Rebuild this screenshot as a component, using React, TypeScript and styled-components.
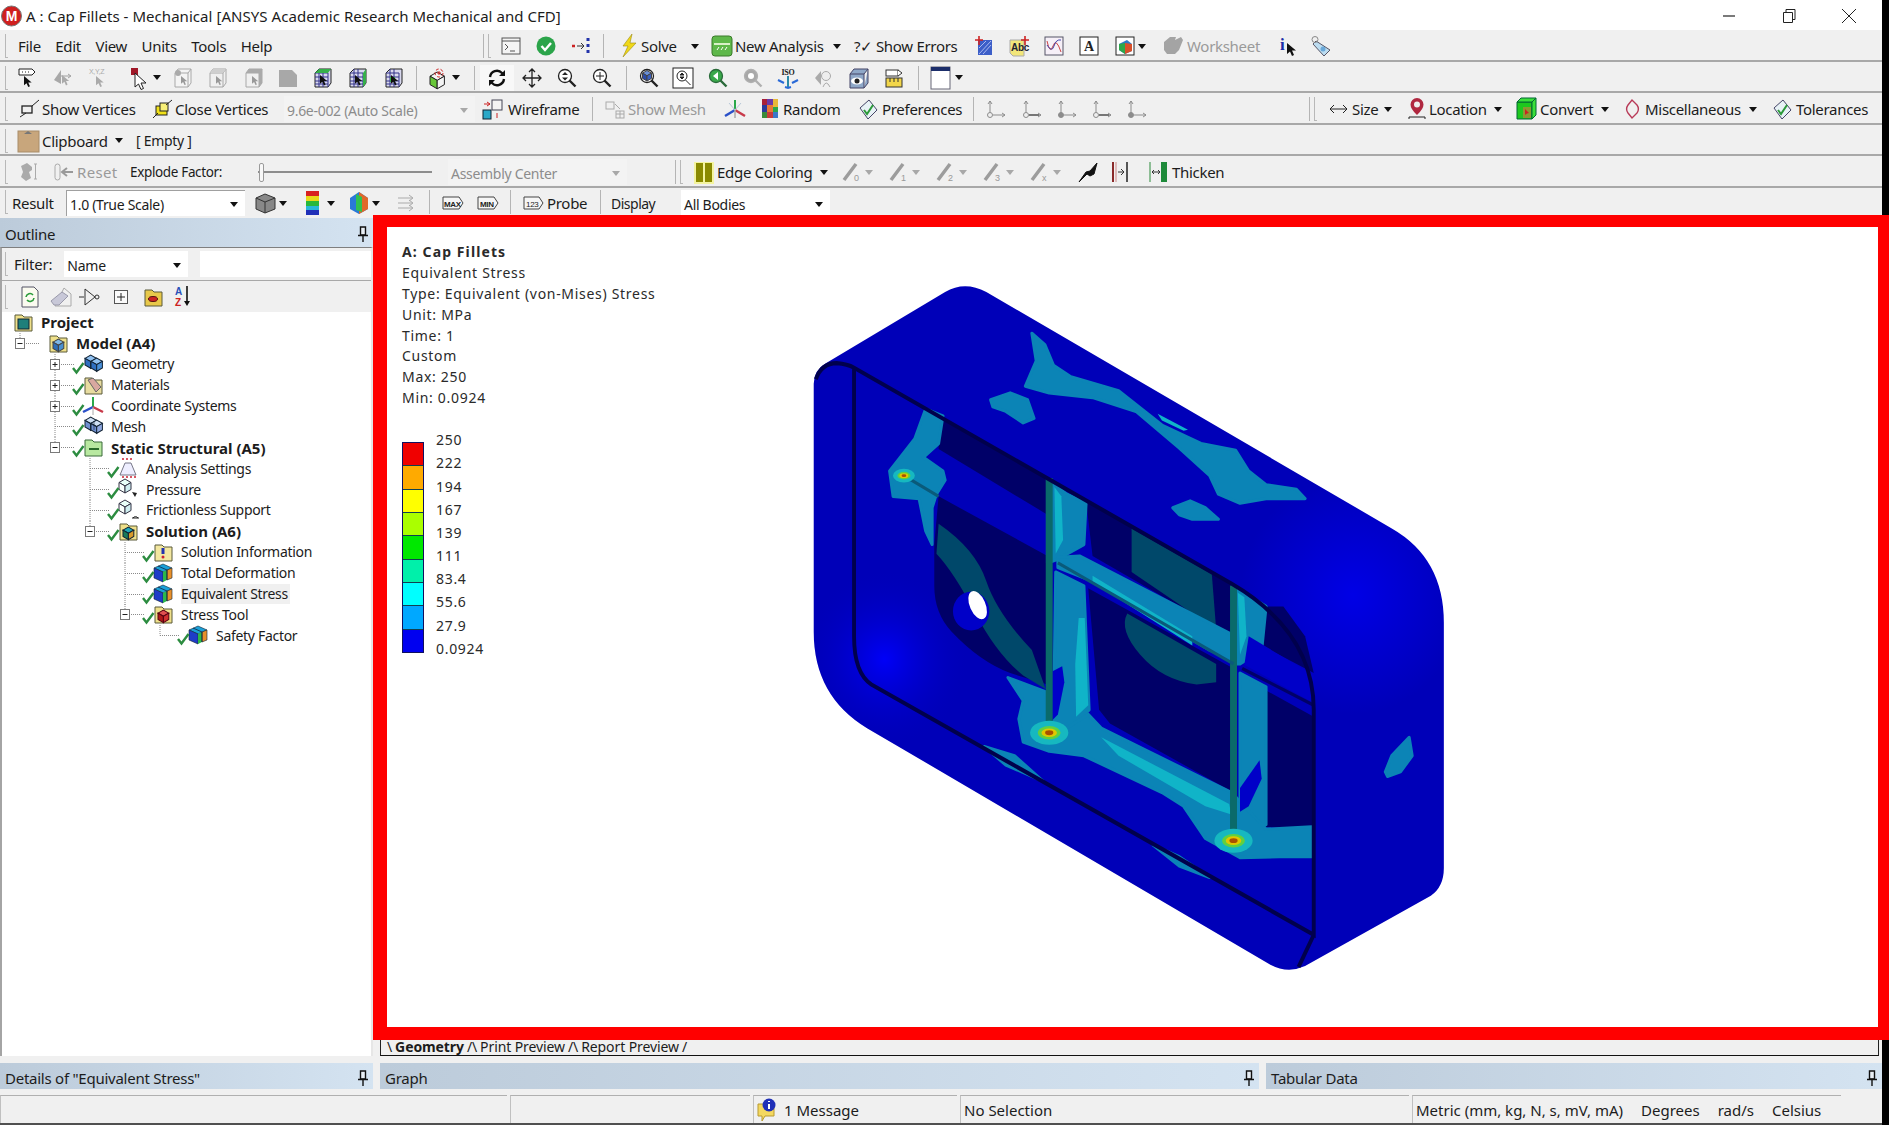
import React from "react";
import styled, { createGlobalStyle } from "styled-components";

const GlobalStyle = createGlobalStyle`
  html, body { margin: 0; padding: 0; background: #000; }
  body { font-family: "Noto Sans", "Liberation Sans", sans-serif; color: #1c1c1c; overflow: hidden; }
`;

const Page = styled.div`
  width: 1889px;
  height: 1125px;
  display: flex;
  background: #000;
  overflow: hidden;
`;

const Main = styled.div`
  width: 1882px;
  height: 1125px;
  display: flex;
  flex-direction: column;
  background: #f0f0f0;
  flex-shrink: 0;
`;

const TitleBar = styled.div`
  height: 30px;
  background: #fff;
  display: flex;
  align-items: center;
  padding: 1px 3px 0 1px;
  box-sizing: border-box;
  font-size: 15px;
  letter-spacing: 0.05px;
`;

const TitleText = styled.span`
  margin-left: 4px;
  flex: 1;
  white-space: nowrap;
`;

const WinButton = styled.div`
  width: 60px;
  display: flex;
  justify-content: center;
`;

const Row = styled.div<{ $h: number }>`
  height: ${(p) => p.$h}px;
  box-sizing: border-box;
  border-bottom: 2px solid #a8a8a8;
  display: flex;
  align-items: center;
  font-size: 15px;
  letter-spacing: -0.3px;
  white-space: nowrap;
  padding: 2px 0 0 5px;
`;

const LastRow = styled(Row)`
  border-bottom: none;
  align-items: flex-start;
  padding-top: 2px;
`;

const Grip = styled.div`
  width: 3px;
  height: 24px;
  margin-right: 2px;
  border-left: 1px solid #b8b8b8;
  border-bottom: 1px solid #b8b8b8;
  box-sizing: border-box;
  flex-shrink: 0;
`;

const Menu = styled.div`
  width: 468px;
  display: flex;
  gap: 14.5px;
  padding-left: 8px;
  box-sizing: border-box;
  flex-shrink: 0;
`;

const Tool = styled.div<{ $w?: number; $pl?: number; $c?: boolean; $off?: boolean; $hi?: boolean }>`
  ${(p) => (p.$w ? `width: ${p.$w}px;` : "")}
  padding-left: ${(p) => p.$pl ?? 0}px;
  box-sizing: border-box;
  height: 26px;
  flex-shrink: 0;
  display: flex;
  align-items: center;
  gap: 3px;
  justify-content: ${(p) => (p.$c ? "center" : "flex-start")};
  color: ${(p) => (p.$off ? "#9a9a9a" : "inherit")};
  background: ${(p) => (p.$hi ? "#f8f8f8" : "transparent")};
`;

const Sep = styled.div<{ $w: number }>`
  width: ${(p) => p.$w}px;
  flex-shrink: 0;
  display: flex;
  justify-content: center;
  &::after {
    content: "";
    width: 1px;
    height: 24px;
    background: #b4b4b4;
  }
`;

const Caret = styled.div<{ $off?: boolean }>`
  width: 0;
  height: 0;
  flex-shrink: 0;
  border-left: 4.5px solid transparent;
  border-right: 4.5px solid transparent;
  border-top: 5px solid ${(p) => (p.$off ? "#a8a8a8" : "#111")};
`;

const Combo = styled.div<{ $w: number; $white?: boolean; $sunken?: boolean; $off?: boolean }>`
  width: ${(p) => p.$w}px;
  height: 26px;
  flex-shrink: 0;
  box-sizing: border-box;
  display: flex;
  align-items: center;
  justify-content: space-between;
  padding: 2px 7px 0 3px;
  background: ${(p) => (p.$white ? "#fff" : "#f3f3f3")};
  color: ${(p) => (p.$off ? "#8c8c8c" : "inherit")};
  font-size: 14px;
  ${(p) => (p.$sunken ? "border-top: 1px solid #a0a0a0; border-left: 1px solid #a0a0a0;" : "")}
`;

const Slider = styled.div`
  width: 174px;
  margin-right: 16px;
  flex-shrink: 0;
  height: 2px;
  background: #8d8d8d;
  position: relative;
  &::before {
    content: "";
    position: absolute;
    left: 1px;
    top: -8px;
    width: 3px;
    height: 17px;
    background: #f8f8f8;
    border: 1px solid #9a9a9a;
    border-radius: 2px;
  }
`;

const Workspace = styled.div`
  height: 841px;
  display: flex;
  flex-shrink: 0;
`;

const LeftPanel = styled.div`
  width: 373px;
  flex-shrink: 0;
  padding-top: 3px;
  box-sizing: border-box;
  display: flex;
  flex-direction: column;
`;

const PaneHeader = styled.div<{ $w?: number }>`
  ${(p) => (p.$w ? `width: ${p.$w}px; flex-shrink: 0;` : "flex: 1;")}
  height: 26px;
  background: linear-gradient(90deg, #bccbda, #d4e3f1);
  display: flex;
  align-items: center;
  justify-content: space-between;
  padding: 3px 5px 0;
  box-sizing: border-box;
  font-size: 15px;
  letter-spacing: -0.25px;
`;

const OutlineHeader = styled(PaneHeader)`
  height: 29px;
  flex: none;
`;

const OutlineBody = styled.div`
  flex: 1;
  display: flex;
  flex-direction: column;
  border-top: 1px solid #7f7f7f;
  border-left: 2px solid #a4a4a4;
  border-right: 2px solid #e6e6e6;
`;

const FilterRow = styled.div`
  height: 33px;
  flex-shrink: 0;
  box-sizing: border-box;
  border-bottom: 1px solid #a8a8a8;
  display: flex;
  align-items: center;
  padding-left: 3px;
  font-size: 15px;
  letter-spacing: -0.2px;
`;

const FilterLabel = styled.span`
  margin-left: 4px;
`;

const FilterSelect = styled(Combo)`
  margin: 0 12px 0 12px;
`;

const FilterInput = styled.div`
  flex: 1;
  height: 26px;
  background: #fff;
`;

const OutlineTools = styled.div`
  height: 31px;
  flex-shrink: 0;
  display: flex;
  align-items: center;
  padding-left: 3px;
`;

const Tree = styled.div`
  flex: 1;
  background: #fff;
  font-size: 14px;
  letter-spacing: -0.3px;
`;

const TreeRow = styled.div<{ $depth: number }>`
  height: 20.9px;
  display: flex;
  align-items: center;
  padding-left: ${(p) => 3 + Math.max(p.$depth - 1, 0) * 35}px;
  white-space: nowrap;
`;

const TreeLabel = styled.span<{ $bold?: boolean; $sel?: boolean }>`
  font-weight: ${(p) => (p.$bold ? 700 : 400)};
  font-size: ${(p) => (p.$bold ? 15 : 14)}px;
  letter-spacing: ${(p) => (p.$bold ? "0" : "inherit")};
  background: ${(p) => (p.$sel ? "#f0f0f0" : "transparent")};
  padding: 0 2px 0 0;
  line-height: 20px;
`;

const ViewColumn = styled.div`
  flex: 1;
  min-width: 0;
  display: flex;
  flex-direction: column;
`;

const Frame = styled.div`
  height: 825px;
  box-sizing: border-box;
  margin-right: -7px;
  border-style: solid;
  border-color: #ff0000;
  border-width: 12px 11px 13px 14px;
  background: #fff;
  display: flex;
  flex-shrink: 0;
`;

const Legend = styled.div`
  width: 402px;
  flex-shrink: 0;
  padding: 15px 0 0 15px;
  box-sizing: border-box;
  font-size: 14px;
  letter-spacing: 0.7px;
  color: #2a2a2a;
`;

const LegendLine = styled.div<{ $bold?: boolean }>`
  height: 20.9px;
  line-height: 20.9px;
  font-weight: ${(p) => (p.$bold ? 700 : 400)};
  letter-spacing: ${(p) => (p.$bold ? "1.1px" : "inherit")};
  white-space: nowrap;
`;

const Scale = styled.div`
  display: flex;
  margin-top: 19px;
`;

const ScaleBars = styled.div`
  width: 22px;
  border: 1px solid #101060;
  box-sizing: border-box;
  margin: 14px 12px 0 0;
  height: 211px;
  display: flex;
  flex-direction: column;
`;

const ScaleBand = styled.div<{ $c: string }>`
  flex: 1;
  background: ${(p) => p.$c};
  & + & {
    border-top: 1px solid #104050;
  }
`;

const ScaleValue = styled.div`
  height: 23.2px;
  line-height: 23.2px;
`;

const ModelSvg = styled.svg`
  margin-top: 42px;
  flex-shrink: 0;
`;

const TabStrip = styled.div`
  height: 16px;
  margin-left: 7px;
  margin-right: 3px;
  box-sizing: border-box;
  border-left: 1px solid #222;
  border-right: 1px solid #222;
  border-bottom: 1px solid #111;
  font-size: 14px;
  letter-spacing: -0.1px;
  line-height: 14px;
  padding-left: 6px;
  display: flex;
  white-space: nowrap;
`;

const TabName = styled.span<{ $on?: boolean }>`
  font-weight: ${(p) => (p.$on ? 700 : 400)};
  margin: 0 3px;
`;

const HeaderRow = styled.div`
  height: 26px;
  margin-top: 7px;
  display: flex;
  gap: 7px;
  flex-shrink: 0;
`;

const StatusBar = styled.div`
  height: 28px;
  margin-top: 6px;
  display: flex;
  flex-shrink: 0;
  font-size: 15px;
  white-space: nowrap;
`;

const StatusCell = styled.div<{ $w: number }>`
  width: ${(p) => p.$w}px;
  flex-shrink: 0;
  box-sizing: border-box;
  border-top: 1px solid #b0b0b0;
  border-left: 1px solid #c0c0c0;
  margin-right: 3px;
  display: flex;
  align-items: center;
  padding-left: 3px;
  padding-top: 1px;
`;

const UnitText = styled.span<{ $ml: number }>`
  margin-left: ${(p) => p.$ml}px;
`;

const BottomLine = styled.div`
  height: 2px;
  background: #505050;
`;

const Ico = styled.svg`
  flex-shrink: 0;
  overflow: visible;
`;

/* ---------- small drawings ---------- */

const I: React.FC<{ w?: number; h?: number; children: React.ReactNode }> = ({ w = 20, h = 20, children }) => (
  <Ico width={w} height={h} viewBox={`0 0 ${w} ${h}`}>
    {children}
  </Ico>
);

const Pointer = ({ x = 0, y = 0, c = "#111", s = 1 }: { x?: number; y?: number; c?: string; s?: number }) => (
  <path transform={`translate(${x} ${y}) scale(${s})`} d="M0 0v11l3-2.5 2 4.5 2-1-2-4.5h4z" fill={c} />
);

const Cube = ({ x = 0, y = 0, s = 1, t = "#fff", l = "#ddd", r = "#bbb", b = "#444" }: { x?: number; y?: number; s?: number; t?: string; l?: string; r?: string; b?: string }) => (
  <g transform={`translate(${x} ${y}) scale(${s})`} stroke={b} strokeWidth={1 / s}>
    <path d="M0 3.5 6 0l6 3.5L6 7z" fill={t} />
    <path d="M0 3.5 6 7v7L0 10.500z" fill={l} />
    <path d="M12 3.500 6 7v7l6-3.500z" fill={r} />
  </g>
);

const Folder = ({ c = "#efe08a" }: { c?: string }) => (
  <path d="M1 3h7l2 2h8v14H1z" fill={c} stroke="#5a5a3a" />
);

const GridBox = ({ c }: { c: string }) => (
  <I>
    <path d="M2 5 6 1h12v14l-3 4H2z" fill="#d8d8ee" stroke="#222" />
    <path d="M2 5h13v14M6 1v4M10 1v18M6 5v14M2 9h13M2 13h13M2 16h13" stroke="#33338a" fill="none" />
    <path d={c === "t" ? "M6 1h12l-3 4H2z" : c === "r" ? "M15 5l3-4v14l-3 4z" : "M6 9h5v5H6z"} fill="#35b04a" />
    <Pointer x={7} y={7} s={0.8} />
  </I>
);

const GrayBox = ({ i }: { i: number }) => (
  <I>
    <path d="M3 5h13v14H3zM3 5l3-4h13l-3 4M16 19l3-4V1" fill={i === 1 ? "#f4f4f4" : "#f0f0f0"} stroke="#a8a8a8" />
    {i === 1 && <circle cx="6" cy="5" r="3" fill="#aaa" />}
    {i === 2 && <path d="M3 5l3-4h13l-3 4z" fill="#cfcfcf" />}
    {i === 3 && <path d="M3 5l3-4h13l-3 4zM16 5l3-4v14l-3 4z" fill="#aaa" />}
    <Pointer x={9} y={8} c="#999" s={0.7} />
  </I>
);

const Magnifier = ({ f = "#fff", c = "#222", children }: { f?: string; c?: string; children?: React.ReactNode }) => (
  <I>
    <circle cx="8" cy="8" r="6.5" fill={f} stroke={c} strokeWidth="1.3" />
    <path d="M12.500 12.500 18.500 18.500" stroke={c} strokeWidth="2.4" />
    {children}
  </I>
);

const Axis = ({ solid, box }: { solid?: boolean; box?: boolean }) => (
  <I w={22}>
    <path d="M5 16V2M3 5l2-3 2 3M8 16h12M17 14l3 2-3 2" stroke="#8c8c8c" fill="none" />
    <circle cx="5" cy="16" r="2.5" fill={solid ? "#8c8c8c" : "#f0f0f0"} stroke="#8c8c8c" />
    {box && <path d="M8 16h10" stroke="#777" strokeWidth="2" />}
  </I>
);

const Edge = ({ n }: { n: string }) => (
  <I w={19}>
    <path d="M1 18 13 2" stroke="#9c9c9c" strokeWidth="3.500" />
    <text x="11" y="19" fontSize="9" fill="#999" fontFamily="Liberation Sans, sans-serif">{n}</text>
  </I>
);

const Triad = () => (
  <I w={22}>
    <path d="M11 11V1" stroke="#2aa84a" strokeWidth="2" />
    <path d="M11 11 1 17" stroke="#2a50c8" strokeWidth="2.500" />
    <path d="M11 11l10 6" stroke="#c83a4a" strokeWidth="2.500" />
    <path d="M11 11v8" stroke="#aaa" strokeWidth="1.500" />
    <path d="M11 11 5 4M11 11l6-7" stroke="#b8c8d8" />
  </I>
);

const Pin = () => (
  <I w={10} h={16}>
    <path d="M2.500 1h5v8h-5z" fill="#e8eef4" stroke="#111" strokeWidth="1.400" />
    <path d="M0 9.500h10M5 10v6" stroke="#111" strokeWidth="1.400" />
  </I>
);

const DocCheck = () => (
  <I w={22}>
    <path d="M3 9 12 1l8 10-9 9z" fill="#e8f2f6" stroke="#446" />
    <path d="M7 11l3 4 6-9" stroke="#2c9a3a" strokeWidth="2" fill="none" />
  </I>
);

const RainbowCube = ({ x = 8 }: { x?: number }) => (
  <g transform={`translate(${x} 1)`}>
    <path d="M0 4 9 0l9 4-9 4z" fill="#1aa0d8" stroke="#123" strokeWidth=".6" />
    <path d="M0 4l9 4v10l-9-4z" fill="#1e3cc8" stroke="#123" strokeWidth=".6" />
    <path d="M9 8v10l4-2V6z" fill="#2cb84a" />
    <path d="M13 6v10l5-2V4z" fill="#e8902a" stroke="#123" strokeWidth=".6" />
    <path d="M4 2l9 4v10" fill="none" stroke="#124" strokeWidth=".8" />
  </g>
);

const Check = () => <path d="M-2 14 1.500 18.500 8.500 9" stroke="#2c8c40" strokeWidth="2.400" fill="none" />;

type TreeKind = "project" | "model" | "geometry" | "materials" | "coords" | "mesh" | "analysis" | "settings" | "pressure" | "support" | "solution" | "info" | "result" | "tool";

const TreeIcon = ({ kind, check }: { kind: TreeKind; check?: boolean }) => (
  <Ico width={36} height={21} viewBox="0 0 36 21">
    {kind === "project" && (
      <g transform="translate(9 0)">
        <Folder />
        <rect x="4" y="7" width="11" height="10" fill="#1f7f7a" stroke="#123" />
      </g>
    )}
    {kind === "model" && (
      <g transform="translate(9 0)">
        <Folder />
        <Cube x={4} y={6} s={0.9} t="#7fb8e8" l="#2f6fb8" r="#4a8fd0" />
      </g>
    )}
    {kind === "geometry" && (
      <>
        <Cube x={10} y={1} s={0.95} t="#8fc0f0" l="#2f6fc0" r="#4a90d8" b="#123" />
        <Cube x={16} y={4} s={0.95} t="#8fc0f0" l="#2f6fc0" r="#4a90d8" b="#123" />
      </>
    )}
    {kind === "materials" && (
      <g transform="translate(9 0)">
        <Folder c="#e8dca0" />
        <path d="M4 5 9 3l8 9-5 5z" fill="#d8a8a0" stroke="#666" />
      </g>
    )}
    {kind === "coords" && (
      <g transform="translate(8 0)">
        <path d="M10 11V1" stroke="#2aa84a" strokeWidth="2" />
        <path d="M10 11 0 16" stroke="#2a50c8" strokeWidth="2.500" />
        <path d="M10 11l10 5" stroke="#c83a4a" strokeWidth="2.500" />
        <path d="M10 11v8" stroke="#aaa" />
      </g>
    )}
    {kind === "mesh" && (
      <>
        <Cube x={10} y={1} s={0.95} t="#cfe0f4" l="#6f8fd0" r="#8fa8e0" b="#123" />
        <Cube x={16} y={4} s={0.95} t="#cfe0f4" l="#6f8fd0" r="#8fa8e0" b="#123" />
        <path d="M16 8l6 3M19 5v9M11 5l5 3" stroke="#123" strokeWidth=".6" />
      </>
    )}
    {kind === "analysis" && (
      <g transform="translate(9 0)">
        <path d="M1 3h7l2 2h8v14H1z" fill="#b8e8a0" stroke="#3a6a3a" />
        <path d="M5 12h10" stroke="#2a6a2a" strokeWidth="2" />
      </g>
    )}
    {kind === "settings" && (
      <g transform="translate(9 0)">
        <path d="M3 1h12M3 19h14" stroke="#c23" strokeWidth="1.500" strokeDasharray="2 2" />
        <path d="M1 17 6 5h6l5 12z" fill="#eef" stroke="#778" />
      </g>
    )}
    {(kind === "pressure" || kind === "support") && (
      <g transform="translate(8 0)">
        <Cube x={1} y={0} s={1} t="#e8fff8" l="#f8fffc" r="#cfeef0" b="#334" />
        {kind === "pressure" ? (
          <path d="M14 13l5 1-2 4z" fill="#222" />
        ) : (
          <path d="M14 18h7M15 18a3 3 0 0 1 5 0" stroke="#222" fill="none" />
        )}
      </g>
    )}
    {kind === "solution" && (
      <g transform="translate(9 0)">
        <Folder />
        <Cube x={4} y={6} s={0.9} t="#20a8b8" l="#1a7a5a" r="#d89a2a" b="#123" />
      </g>
    )}
    {kind === "info" && (
      <g transform="translate(9 0)">
        <Folder c="#f3e7a0" />
        <path d="M9 6v6" stroke="#2333b0" strokeWidth="3" />
        <circle cx="9" cy="15" r="1.500" fill="#c23" />
      </g>
    )}
    {kind === "result" && <RainbowCube x={9} />}
    {kind === "tool" && (
      <g transform="translate(9 0)">
        <Folder />
        <Cube x={4} y={6} s={0.9} t="#e05050" l="#b01818" r="#d03030" b="#501" />
      </g>
    )}
    {check && <Check />}
  </Ico>
);

const Connector = ({ mode, last, stub }: { mode: "plus" | "minus" | "line"; last?: boolean; stub?: boolean }) => (
  <Ico width={35} height={21} viewBox="0 0 35 21">
    <g stroke="#8a8a8a" strokeDasharray="1 1">
      <path d={`M15 0V${last ? (stub ? 6 : 10.5) : 21}`} />
      <path d="M15 10.500H35" />
    </g>
    {mode !== "line" && (
      <>
        <rect x="10.500" y="5.500" width="9" height="10" fill="#fff" stroke="#7a7a7a" />
        <path d={mode === "plus" ? "M12.500 10.500h5M15 8v5" : "M12.500 10.500h5"} stroke="#222" />
      </>
    )}
  </Ico>
);

/* ---------- data ---------- */

type TreeItem = {
  label: string;
  depth: number;
  icon: TreeKind;
  conn?: "plus" | "minus" | "line";
  last?: boolean;
  bold?: boolean;
  check?: boolean;
  sel?: boolean;
};

const treeItems: TreeItem[] = [
  { label: "Project", depth: 0, icon: "project", bold: true },
  { label: "Model (A4)", depth: 1, icon: "model", conn: "minus", last: true, bold: true },
  { label: "Geometry", depth: 2, icon: "geometry", conn: "plus", check: true },
  { label: "Materials", depth: 2, icon: "materials", conn: "plus", check: true },
  { label: "Coordinate Systems", depth: 2, icon: "coords", conn: "plus", check: true },
  { label: "Mesh", depth: 2, icon: "mesh", conn: "line", check: true },
  { label: "Static Structural (A5)", depth: 2, icon: "analysis", conn: "minus", last: true, bold: true, check: true },
  { label: "Analysis Settings", depth: 3, icon: "settings", conn: "line", check: true },
  { label: "Pressure", depth: 3, icon: "pressure", conn: "line", check: true },
  { label: "Frictionless Support", depth: 3, icon: "support", conn: "line", check: true },
  { label: "Solution (A6)", depth: 3, icon: "solution", conn: "minus", last: true, bold: true, check: true },
  { label: "Solution Information", depth: 4, icon: "info", conn: "line", check: true },
  { label: "Total Deformation", depth: 4, icon: "result", conn: "line", check: true },
  { label: "Equivalent Stress", depth: 4, icon: "result", conn: "line", check: true, sel: true },
  { label: "Stress Tool", depth: 4, icon: "tool", conn: "minus", last: true, check: true },
  { label: "Safety Factor", depth: 5, icon: "result", conn: "line", last: true, check: true },
];

const legendInfo = ["Equivalent Stress", "Type: Equivalent (von-Mises) Stress", "Unit: MPa", "Time: 1", "Custom", "Max: 250", "Min: 0.0924"];
const scaleValues = ["250", "222", "194", "167", "139", "111", "83.4", "55.6", "27.9", "0.0924"];
const scaleColors = ["#f00000", "#ffaa00", "#ffff00", "#aaff00", "#00e800", "#00f0aa", "#00ffff", "#00a8ff", "#0000f0"];

/* ---------- the stress plot, traced in the crop's own units ---------- */

const navy = "#000068";
const teal = "#00486a";
const band = "#0b84b6";
const aqua = "#10b4c8";
const shell =
  "M360 50Q405 25 455 50L1390 565Q1510 630 1510 770V1305Q1510 1345 1480 1365L1190 1518Q1150 1535 1110 1515L180 1000Q57 930 57 790V250Q57 220 85 205Z";

const HotSpot = ({ x, y, k = 1 }: { x: number; y: number; k?: number }) => (
  <g transform={`translate(${x} ${y}) scale(${k})`}>
    <ellipse rx="42" ry="25" fill="#16b8c0" />
    <ellipse rx="25" ry="14" fill="#60d040" />
    <ellipse rx="17" ry="9" fill="#e0c800" />
    <ellipse rx="9" ry="5" fill="#a85000" />
  </g>
);

const StressModel = () => (
  <ModelSvg width={680} height={720} viewBox="0 0 1568 1568" preserveAspectRatio="none">
    <defs>
      <radialGradient id="glowR" cx="1300" cy="710" r="260" gradientUnits="userSpaceOnUse">
        <stop offset="0" stopColor="#0000e6" />
        <stop offset="1" stopColor="#0000b8" />
      </radialGradient>
      <radialGradient id="glowL" cx="220" cy="850" r="190" gradientUnits="userSpaceOnUse">
        <stop offset="0" stopColor="#0000f8" />
        <stop offset="1" stopColor="#0000c0" stopOpacity="0" />
      </radialGradient>
      <clipPath id="shellClip">
        <path d={shell} />
      </clipPath>
    </defs>
    <path d={shell} fill="url(#glowR)" />
    <path d="M57 600H450V1100H57Z" fill="url(#glowL)" clipPath="url(#shellClip)" />
    <path d="M345 322 596 455V535L345 392Z" fill={navy} />
    <path d="M345 495 596 625V905L510 880Q440 855 375 790Q335 750 335 690V600Z" fill={navy} />
    <path d="M345 555Q430 610 455 680T560 830L592 915 540 885Q480 840 430 750T340 620Z" fill={teal} />
    <ellipse cx="420" cy="745" rx="42" ry="42" fill="#0000c8" />
    <ellipse cx="435" cy="732" rx="18" ry="33" transform="rotate(-25 435 732)" fill="#fff" />
    <path d="M685 505 1030 690V805L700 625Z" fill={navy} />
    <path d="M790 565 975 665 985 785 790 660Z" fill={teal} />
    <path d="M690 695 1025 870V1140L740 990 715 960Z" fill={navy} />
    <path d="M780 750 985 860V900L940 905Q860 895 810 840T780 750Z" fill={teal} />
    <path d="M1100 735H1140L1190 800 1210 880 1070 810Z" fill={navy} />
    <path d="M1095 915 1210 975V1220L1100 1215Z" fill={navy} />

    <g fill={band} stroke={band} strokeWidth="7" strokeLinejoin="round">
      <path d="M560 140 590 165 610 210 650 235 760 265 860 340 950 380 1030 395 1060 440 1100 470 1170 480 1190 500 1100 500 1040 510 990 490 970 450 900 390 800 310 700 280 600 270 545 255 570 200Z" />
      <path d="M465 285 510 270 550 285 565 325 540 335 500 310 470 300Z" />
      <path d="M885 520 925 505 960 520 990 545 930 545 900 535Z" />
      <path d="M1375 1095 1390 1060 1430 1020 1437 1060 1410 1095 1380 1105Z" />
      <path d="M450 1040 520 1060 585 1115 500 1080Z" />
      <path d="M840 1255 900 1280 970 1325 900 1300Z" />
      <path d="M315 305 355 320 345 380 310 410 355 440 360 460 340 490 330 520 330 600 315 570 300 500 240 495 232 440 290 370Z" />
      <path d="M596 458 640 490 685 510 680 600 620 632 596 640Z" />
      <path d="M615 660 680 690 692 960 640 1010 610 990Z" />
      <path d="M1022 690 1100 735 1090 830 1040 860 1022 860Z" />
      <path d="M1040 880 1100 910 1100 1210 1050 1232 1040 1180Z" />
      <path d="M620 628 670 625 1030 800V855L970 830 700 680 620 650Z" />
      <path d="M505 890 590 920 600 990 640 1000 690 970 720 1000 1020 1140 1100 1220 1205 1215V1280H1130L1040 1282 960 1240 910 1170 860 1140 680 1060 600 1050 540 1030 530 980 540 940Z" />
    </g>
    <path d="M850 315 920 350 910 352 860 330Z" fill={aqua} />
    <path d="M612 475 628 495 632 590 615 620Z" fill={aqua} />
    <path d="M668 760 682 760 690 950 662 975 660 860Z" fill={aqua} />
    <path d="M600 880 630 865 635 900 620 970 605 985Z" fill="#0000c8" />
    <path d="M1035 705 1050 715 1055 800 1040 840Z" fill={aqua} />
    <path d="M1040 1130 1085 1070 1090 1110 1060 1170 1040 1182Z" fill="#0000c8" />
    <path d="M700 668 930 800 930 820 700 682Z" fill={aqua} />
    <path d="M1050 862 1210 945V885L1060 800Z" fill="#0000c8" />
    <path d="M720 1020 1015 1165 1020 1188 960 1170 760 1060Z" fill={aqua} />

    <path d="M600 455V1000M1025 690V1235" stroke="#0a6a6a" strokeWidth="16" fill="none" />
    <path d="M265 450 345 495M620 640 1025 860" stroke="#0a5a7a" strokeWidth="7" fill="none" />
    <path d="M1045 870 1210 950" stroke={navy} strokeWidth="7" fill="none" />
    <HotSpot x={600} y={1010} k={1.05} />
    <HotSpot x={1025} y={1245} k={1.05} />
    <HotSpot x={265} y={450} k={0.6} />

    <path
      d="M62 240Q75 205 110 205Q135 207 150 215L1020 685Q1210 790 1210 960V1450L190 905Q150 880 150 800V215M1210 1450 1175 1520"
      fill="none"
      stroke="#00004c"
      strokeWidth="9"
    />
  </ModelSvg>
);

/* ---------- app ---------- */

export default function App() {
  return (
    <Page>
      <GlobalStyle />
      <Main>
        <TitleBar>
          <I w={21} h={22}>
            <circle cx="10.500" cy="11" r="10" fill="#cf1f1f" stroke="#777" />
            <text x="10.500" y="16" fontSize="14" fontWeight="700" fill="#fff" textAnchor="middle" fontFamily="Liberation Sans, sans-serif">M</text>
          </I>
          <TitleText>A : Cap Fillets - Mechanical [ANSYS Academic Research Mechanical and CFD]</TitleText>
          <WinButton><I w={14} h={14}><path d="M1 7h12" stroke="#222" strokeWidth="1.200" /></I></WinButton>
          <WinButton><I w={14} h={14}><path d="M1.500 3.500h9v10h-9zM4 3.500V.5h9v10h-2" fill="none" stroke="#222" /></I></WinButton>
          <WinButton><I w={14} h={14}><path d="M0 0l14 14M14 0 0 14" stroke="#222" /></I></WinButton>
        </TitleBar>

        <Row $h={32}>
          <Grip />
          <Menu>
            <span>File</span><span>Edit</span><span>View</span><span>Units</span><span>Tools</span><span>Help</span>
          </Menu>
          <Sep $w={10} />
          <Grip />
          <Tool $w={42} $pl={8}>
            <I><rect x="1" y="2" width="18" height="16" fill="#f4f4f4" stroke="#555" /><path d="M1 5h18M4 8l3 3-3 3M9 15h5" stroke="#555" fill="none" /></I>
          </Tool>
          <Tool $w={36}>
            <I w={22}><circle cx="11" cy="10" r="9.500" fill="#2ba44a" /><path d="M6.500 10l3.500 4 6-7" stroke="#fff" strokeWidth="2.400" fill="none" /></I>
          </Tool>
          <Tool $w={26}>
            <I w={20}><path d="M1 10h3" stroke="#c22" strokeWidth="2.500" /><path d="M6 10h6M10 7l3 3-3 3" stroke="#333" fill="none" /><path d="M17 2v3M17 8v3M17 14v3" stroke="#23a" strokeWidth="3" /></I>
          </Tool>
          <Sep $w={12} />
          <Tool $w={81} $pl={9}>
            <I w={20} h={24}><path d="M14 0 5 12h5L5 23l13-14h-6z" fill="#f0d818" stroke="#9a8a10" strokeWidth=".6" /></I>
            <span>Solve</span>
          </Tool>
          <Tool $w={22} $pl={1}><Caret /></Tool>
          <Tool $w={120}>
            <I><rect x="0" y="0" width="20" height="20" rx="3" fill="#5eb84a" stroke="#3a7a2a" /><path d="M2 8h16" stroke="#d8f0c8" strokeWidth="2" /><path d="M5 14l2-3M9 14l2-3M13 14l2-3" stroke="#fff" /></I>
            <span>New Analysis</span>
          </Tool>
          <Tool $w={22} $pl={1}><Caret /></Tool>
          <Tool $w={120}>
            <span>?✓</span>
            <span>Show Errors</span>
          </Tool>
          <Tool $w={35}>
            <I><rect x="4" y="4" width="14" height="15" fill="#3c5ec8" /><path d="M5 18 17 5M9 18l8-9M5 12l7-7" stroke="#a8b8f0" /><path d="M5 0v9M1 4h8" stroke="#c22" strokeWidth="1.600" /></I>
          </Tool>
          <Tool $w={35}>
            <I><path d="M1 4h14v16H4l-3-3z" fill="#f2e67a" stroke="#aaa" /><text x="2" y="15" fontSize="10" fontWeight="700" fill="#223" fontFamily="Liberation Sans, sans-serif">Abc</text><path d="M16 0v9M12 4h8" stroke="#c22" strokeWidth="1.600" /></I>
          </Tool>
          <Tool $w={35}>
            <I><rect x="1" y="1" width="18" height="18" fill="#f6f0f8" stroke="#556" /><path d="M3 5q3 14 6 5t8 6" stroke="#c44" fill="none" /><path d="M3 9q5 8 7 1t7-6" stroke="#44a" fill="none" /></I>
          </Tool>
          <Tool $w={36}>
            <I><rect x="1" y="1" width="18" height="18" fill="#fff" stroke="#222" /><text x="10" y="15" fontSize="14" fontWeight="700" fill="#222" textAnchor="middle" fontFamily="Liberation Serif, serif">A</text></I>
          </Tool>
          <Tool $w={47}>
            <I><rect x="1" y="1" width="18" height="18" fill="#fff" stroke="#222" /><path d="M4 8l8-4 5 4v7l-7 3-6-4z" fill="#2c7ac8" /><path d="M10 7l7 1v7l-7 3z" fill="#d8502a" /><path d="M4 8l6-1v11l-6-4z" fill="#2ca84a" /></I>
            <Caret />
          </Tool>
          <Tool $w={118} $off>
            <I w={22}><path d="M2 6 8 1h6l-1 3 6-3 2 3-4 10-4 4H5L2 14z" fill="#a4a4a4" /></I>
            <span>Worksheet</span>
          </Tool>
          <Tool $w={30}>
            <I><text x="0" y="14" fontSize="17" fontWeight="700" fill="#1a2ea8" fontFamily="Liberation Serif, serif">i</text><Pointer x={7} y={7} /></I>
          </Tool>
          <Tool>
            <I w={22}><path d="M6 5 20 14l-6 6L3 8z" fill="#bcdcf0" stroke="#556" /><circle cx="5" cy="3.500" r="3" fill="none" stroke="#888" /><circle cx="13" cy="13" r="2.500" fill="#6aa8d8" /></I>
          </Tool>
        </Row>

        <Row $h={31}>
          <Grip />
          <Tool $w={35} $c>
            <I><path d="M1 1h13l3 3-3 3H1z" fill="#fff" stroke="#222" /><path d="M4 4h1M7 4h1M10 4h1" stroke="#222" /><Pointer x={6} y={8} s={0.85} /></I>
          </Tool>
          <Tool $w={36} $c>
            <I><path d="M1 12 8 2v14z" fill="#a8a8a8" /><path d="M8 8h9M15 6l3 2-3 2" stroke="#a0a0a0" fill="none" /><Pointer x={9} y={7} c="#aaa" s={0.8} /></I>
          </Tool>
          <Tool $w={36} $c>
            <I><text x="0" y="6" fontSize="7" fill="#aaa" fontFamily="Liberation Sans, sans-serif">X,Y,Z</text><Pointer x={7} y={8} c="#aaa" s={0.85} /></I>
          </Tool>
          <Tool $w={47} $pl={14} style={{ gap: 2 }}>
            <I w={20}><rect x="0" y="0" width="7" height="7" fill="#a01828" /><path transform="translate(4 5)" d="M0 0v14l3.500-3 2.500 5.500 2.500-1-2.500-5.500h5z" fill="#fff" stroke="#222" /></I>
            <Caret />
          </Tool>
          <Tool $w={35} $c><GrayBox i={1} /></Tool>
          <Tool $w={36} $c><GrayBox i={2} /></Tool>
          <Tool $w={35} $c><GrayBox i={3} /></Tool>
          <Tool $w={35} $c>
            <I><path d="M1 2h13l5 5v12H1z" fill="#a8a8a8" /></I>
          </Tool>
          <Tool $w={35} $c><GridBox c="t" /></Tool>
          <Tool $w={36} $c><GridBox c="r" /></Tool>
          <Tool $w={35} $c><GridBox c="f" /></Tool>
          <Sep $w={10} />
          <Tool $w={47} $pl={7} style={{ gap: 2 }}>
            <I w={22}><Cube x={2} y={4} s={1.2} t="#f4f4f4" l="#68c838" r="#f4f4f4" b="#222" /><circle cx="11" cy="5" r="4" fill="none" stroke="#c22" strokeDasharray="3 2" /><path d="M9 5h4M11 3v4" stroke="#c22" /></I>
            <Caret />
          </Tool>
          <Sep $w={12} />
          <Tool $w={34} $c $hi>
            <I><path d="M3 9a7 7 0 0 1 12-4l2 2M17 11a7 7 0 0 1-12 4l-2-2" fill="none" stroke="#111" strokeWidth="2.400" /><path d="M18 2v6h-6zM2 18v-6h6z" fill="#111" /></I>
          </Tool>
          <Tool $w={35} $c>
            <I><path d="M10 1v18M1 10h18M7 4l3-3 3 3M7 16l3 3 3-3M4 7l-3 3 3 3M16 7l3 3-3 3" fill="none" stroke="#222" strokeWidth="1.300" /></I>
          </Tool>
          <Tool $w={35} $c>
            <Magnifier><path d="M5 7l3-3 3 3zM5 9.500l3 3 3-3z" fill="#222" /></Magnifier>
          </Tool>
          <Tool $w={36} $c>
            <Magnifier><path d="M4 8h8M8 4v8" stroke="#222" /></Magnifier>
          </Tool>
          <Sep $w={12} />
          <Tool $w={33} $c>
            <Magnifier><Cube x={3.500} y={2.500} s={0.75} t="#6a90d8" l="#2a4aa8" r="#3a60c0" /></Magnifier>
          </Tool>
          <Tool $w={35} $c>
            <I>
              <rect x="0" y="0" width="20" height="20" fill="#fff" stroke="#222" />
              <circle cx="9" cy="8" r="5" fill="#fff" stroke="#222" />
              <path d="M7 7l2-2 2 2zM7 9l2 2 2-2zM12.500 12l5 5" fill="#222" stroke="#222" />
            </I>
          </Tool>
          <Tool $w={35} $c>
            <Magnifier f="#3aa84a" c="#2a6a3a"><path d="M10 4 5 8l5 4z" fill="#fff" /></Magnifier>
          </Tool>
          <Tool $w={35} $c>
            <Magnifier f="#a8a8a8" c="#b0b0b0"><circle cx="8" cy="8" r="3" fill="#fff" /></Magnifier>
          </Tool>
          <Tool $w={36} $c>
            <I w={22}><text x="11" y="7" fontSize="8" fontWeight="700" fill="#222" textAnchor="middle" fontFamily="Liberation Serif, serif">ISO</text><path d="M11 8v12" stroke="#2a8aa8" strokeWidth="2" /><path d="M1 12l6 3M21 12l-6 3M8 19l3 1 3-1" stroke="#2a6ad8" strokeWidth="2" fill="none" /></I>
          </Tool>
          <Tool $w={35} $c>
            <I><path d="M1 10 7 3v14z" fill="#aaa" /><circle cx="12" cy="8" r="4.500" fill="#eee" stroke="#aaa" /><path d="M9 19q3-8 7 0" fill="none" stroke="#aaa" /></I>
          </Tool>
          <Tool $w={35} $c>
            <I><path d="M1 6h14v14H1zM1 6l4-5h14L15 6M15 20l4-5V1" fill="#8fa8c8" stroke="#446" /><ellipse cx="8" cy="13" rx="6" ry="3.500" fill="#fff" /><circle cx="8" cy="13" r="2.500" fill="#222" /></I>
          </Tool>
          <Tool $w={35} $c>
            <I w={18}><rect x="1" y="2" width="12" height="6" fill="#fff" stroke="#333" /><path d="M13 2l4 3-4 3" fill="#fff" stroke="#333" /><rect x="1" y="10" width="16" height="9" fill="#f2d64a" stroke="#333" /><path d="M5 10v4M9 10v4M13 10v4" stroke="#333" /></I>
          </Tool>
          <Sep $w={14} />
          <Tool $pl={5} style={{ gap: 3 }}>
            <I w={22} h={24}><rect x="1" y="1" width="19" height="22" fill="#fff" stroke="#667" /><rect x="1" y="1" width="19" height="4" fill="#1c2e6a" /></I>
            <Caret />
          </Tool>
        </Row>

        <Row $h={32}>
          <Grip />
          <Tool $w={133} $pl={10}>
            <I w={19}><rect x="2" y="7" width="10" height="7" fill="none" stroke="#222" strokeWidth="1.300" /><path d="M0 18 6 14M12 7l7-6" stroke="#222" /></I>
            <span>Show Vertices</span>
          </Tool>
          <Tool $w={141} $pl={10}>
            <I w={19}><rect x="3" y="7" width="11" height="9" fill="#f0e018" stroke="#222" /><rect x="7" y="4" width="8" height="8" fill="#f8f078" stroke="#222" /><path d="M0 19 5 14M13 6l6-5" stroke="#222" /></I>
            <span>Close Vertices</span>
          </Tool>
          <Combo $w={191} $off>
            <span>9.6e-002 (Auto Scale)</span>
            <Caret $off />
          </Combo>
          <Tool $w={112} $pl={8}>
            <I w={22}><rect x="0" y="11" width="8" height="9" fill="#2aa8c8" stroke="#123" /><rect x="9" y="1" width="10" height="10" fill="#f4f4f4" stroke="#445" /><path d="M1 5h6M4 3l3 2-3 2M14 14v5" stroke="#c22" fill="none" /></I>
            <span>Wireframe</span>
          </Tool>
          <Sep $w={10} />
          <Tool $w={119} $pl={8} $off>
            <I><rect x="1" y="3" width="8" height="7" fill="none" stroke="#aaa" /><rect x="11" y="12" width="8" height="7" fill="none" stroke="#aaa" /><path d="M15 12v7M11 15h8M10 5l5 5" stroke="#aaa" /></I>
            <span>Show Mesh</span>
          </Tool>
          <Tool $w={38} $c><Triad /></Tool>
          <Tool $w={95} $pl={8} style={{ gap: 5 }}>
            <I w={16}><rect x="0" y="0" width="5" height="6" fill="#a82038" /><rect x="5" y="0" width="6" height="6" fill="#6a3aa8" /><rect x="11" y="0" width="5" height="8" fill="#e8b838" /><rect x="0" y="6" width="5" height="7" fill="#2a3a9a" /><rect x="5" y="6" width="6" height="7" fill="#e87838" /><rect x="11" y="8" width="5" height="5" fill="#2aa84a" /><rect x="0" y="13" width="5" height="6" fill="#3a8a3a" /><rect x="5" y="13" width="6" height="6" fill="#c83a3a" /><rect x="11" y="13" width="5" height="6" fill="#3a78c8" /></I>
            <span>Random</span>
          </Tool>
          <Tool $w={119} $pl={8}>
            <DocCheck />
            <span>Preferences</span>
          </Tool>
          <Sep $w={10} />
          <Tool $w={36} $c><Axis /></Tool>
          <Tool $w={35} $c><Axis box /></Tool>
          <Tool $w={35} $c><Axis solid /></Tool>
          <Tool $w={35} $c><Axis box /></Tool>
          <Tool $w={36} $c><Axis solid /></Tool>
          <Tool $w={149} />
          <Sep $w={10} />
          <Grip />
          <Tool $w={65} $pl={10} style={{ gap: 4 }}>
            <I w={19} h={10}><path d="M1 5h17M5 1 1 5l4 4M14 1l4 4-4 4" fill="none" stroke="#222" /></I>
            <span>Size</span>
          </Tool>
          <Tool $w={19}><Caret /></Tool>
          <Tool $w={91} $pl={5}>
            <I w={18} h={22}><path d="M9 0a6.500 6.500 0 0 1 6.500 6.500Q15.500 11 9 17 2.500 11 2.500 6.500A6.500 6.500 0 0 1 9 0z" fill="#b02840" /><circle cx="9" cy="6.500" r="3" fill="#eee" /><path d="M1 21v-2h16v2" stroke="#222" fill="none" /></I>
            <span>Location</span>
          </Tool>
          <Tool $w={17}><Caret /></Tool>
          <Tool $w={90} $pl={5}>
            <I w={21} h={22}><path d="M1 4h15v17H1z" fill="#1ec81e" stroke="#063" /><path d="M1 4l4-4h15l-4 4zM16 4l4-4v17l-4 4z" fill="#3ae03a" stroke="#063" /><rect x="7" y="9" width="8" height="11" fill="#8a9a30" /><path d="M9 11v6l2-1.500 2-.5z" fill="#c22" /></I>
            <span>Convert</span>
          </Tool>
          <Tool $w={17}><Caret /></Tool>
          <Tool $w={131} $pl={5}>
            <I w={19}><path d="M5 14a7 7 0 0 1 0-8M14 6a7 7 0 0 1 0 8M5 6l4-5 5 5M14 14l-5 5-4-5" fill="none" stroke="#b83a58" strokeWidth="1.400" /></I>
            <span>Miscellaneous</span>
          </Tool>
          <Tool $w={17}><Caret /></Tool>
          <Tool $pl={5}>
            <DocCheck />
            <span>Tolerances</span>
          </Tool>
        </Row>

        <Row $h={31}>
          <Grip />
          <Tool $w={105} $pl={8}>
            <I w={21} h={22}><rect x="0" y="1" width="21" height="21" fill="#c8a67c" stroke="#a88c68" /><path d="M6 4l4-3 4 3z" fill="#777" /></I>
            <span>Clipboard</span>
          </Tool>
          <Tool $w={21}><Caret /></Tool>
          <Tool style={{ fontSize: 14 }}>[ Empty ]</Tool>
        </Row>

        <Row $h={32}>
          <Grip />
          <Tool $w={35} $pl={9}>
            <I w={18}><path d="M2 4l6-3 5 4v3l-3 2 2 6-5 3-5-4 2-5z" fill="#aaa" /><path d="M15 2h3M16.500 2v15M15 17h3" stroke="#aaa" /></I>
          </Tool>
          <Tool $w={75} $pl={9} $off style={{ letterSpacing: 0.3 }}>
            <I w={20}><rect x="1" y="2" width="5" height="16" rx="2.500" fill="none" stroke="#aaa" /><path d="M19 10H9M13 6l-5 4 5 4" stroke="#999" strokeWidth="2" fill="none" /></I>
            <span>Reset</span>
          </Tool>
          <Tool $w={138} $pl={10} style={{ fontSize: 13.5, letterSpacing: -0.35 }}>Explode Factor:</Tool>
          <Slider />
          <Combo $w={179} $off>
            <span>Assembly Center</span>
            <Caret $off />
          </Combo>
          <Tool $w={43} />
          <Sep $w={10} />
          <Grip />
          <Tool $w={135} $pl={9}>
            <I w={20}><rect x="0" y="0" width="20" height="22" fill="#f4f4a0" /><rect x="2" y="1" width="7" height="19" fill="#8a8a00" /><rect x="11" y="1" width="7" height="19" fill="#8a8a00" /></I>
            <span>Edge Coloring</span>
          </Tool>
          <Tool $w={23}><Caret /></Tool>
          {["0", "1", "2", "3", "x"].map((n) => (
            <Tool key={n} $w={47}>
              <Edge n={n} />
              <Caret $off />
            </Tool>
          ))}
          <Tool $w={33}>
            <I w={21}><path d="M1 20 8 10l4-1 7-8-3 11-4 2-3-2z" fill="#111" stroke="#111" /></I>
          </Tool>
          <Tool $w={38}>
            <I><path d="M2 0v20" stroke="#8a2a2a" strokeWidth="2" /><path d="M5 0v20" stroke="#c88" /><path d="M7 10h6M10 7l3 3-3 3" stroke="#333" fill="none" /><path d="M16 0v20" stroke="#222" strokeWidth="1.500" /></I>
          </Tool>
          <Tool $pl={0} style={{ gap: 5 }}>
            <I w={18}><path d="M1 0v20" stroke="#2a8a3a" /><path d="M4 10h6M5 8l-2 2 2 2M9 8l2 2-2 2" stroke="#333" fill="none" /><rect x="12" y="0" width="6" height="20" fill="#1e8a3a" /></I>
            <span>Thicken</span>
          </Tool>
        </Row>

        <LastRow $h={27}>
          <Grip />
          <Tool $w={56} $pl={2}>Result</Tool>
          <Combo $w={179} $white $sunken>
            <span>1.0 (True Scale)</span>
            <Caret />
          </Combo>
          <Tool $w={51} $pl={10}>
            <I w={21}><path d="M1 5l9-4 10 4v11l-10 4-9-4z" fill="#888" stroke="#333" /><path d="M1 5l9 4 10-4M10 9v11" stroke="#333" fill="none" /></I>
            <Caret />
          </Tool>
          <Tool $w={43} $pl={10} style={{ gap: 8 }}>
            <I w={13} h={24}><rect x="0" y="0" width="13" height="5" fill="#d82020" /><rect x="0" y="5" width="13" height="5" fill="#e8d818" /><rect x="0" y="10" width="13" height="5" fill="#28b83a" /><rect x="0" y="15" width="13" height="4" fill="#28b8d8" /><rect x="0" y="19" width="13" height="5" fill="#2030b8" /></I>
            <Caret />
          </Tool>
          <Tool $w={50} $pl={10}>
            <I w={20} h={22}><path d="M1 6 10 0l9 6v11l-9 5-9-5z" fill="#2a78d8" /><path d="M10 0l9 6v11l-9 5z" fill="#e0682a" /><path d="M7 2l6 3v15l-6-2z" fill="#30c050" /></I>
            <Caret />
          </Tool>
          <Tool $w={34} $pl={8}>
            <I><path d="M1 5h14M12 2l4 3-4 3M1 10h14M12 7l4 3-4 3M1 15h14M12 12l4 3-4 3" fill="none" stroke="#aaa" /></I>
          </Tool>
          <Sep $w={12} />
          <Tool $w={35} $pl={7}>
            <I w={22} h={14}><path d="M1 1h16l4 6-4 6H1z" fill="#f6f6f6" stroke="#444" /><text x="2" y="10.500" fontSize="8" fontWeight="700" fill="#222" fontFamily="Liberation Sans, sans-serif">MAX</text></I>
          </Tool>
          <Tool $w={34} $pl={7}>
            <I w={22} h={14}><path d="M1 1h16l4 6-4 6H1z" fill="#f6f6f6" stroke="#444" /><text x="3" y="10.500" fontSize="8" fontWeight="700" fill="#222" fontFamily="Liberation Sans, sans-serif">MIN</text></I>
          </Tool>
          <Sep $w={12} />
          <Tool $w={78} $pl={7}>
            <I w={21} h={14}><path d="M1 1h15l4 6-4 6H1z" fill="#f6f6f6" stroke="#444" /><text x="3" y="10.500" fontSize="8" fill="#222" fontFamily="Liberation Sans, sans-serif">123</text></I>
            <span>Probe</span>
          </Tool>
          <Sep $w={12} />
          <Tool $w={75} $pl={5} style={{ fontSize: 14, letterSpacing: -0.5 }}>Display</Tool>
          <Combo $w={149} $white>
            <span>All Bodies</span>
            <Caret />
          </Combo>
        </LastRow>

        <Workspace>
          <LeftPanel>
            <OutlineHeader>
              <span>Outline</span>
              <Pin />
            </OutlineHeader>
            <OutlineBody>
              <FilterRow>
                <Grip />
                <FilterLabel>Filter:</FilterLabel>
                <FilterSelect $w={124} $white>
                  <span>Name</span>
                  <Caret />
                </FilterSelect>
                <FilterInput />
              </FilterRow>
              <OutlineTools>
                <Grip />
                <Tool $w={32} $pl={11}>
                  <I w={18} h={22}><path d="M1 1h12l4 4v16H1z" fill="#fbfbf0" stroke="#556" /><path d="M5 11a4 4 0 0 1 7-2M13 12a4 4 0 0 1-7 2" stroke="#2a9a3a" strokeWidth="1.600" fill="none" /></I>
                </Tool>
                <Tool $w={32} $pl={8}>
                  <I w={22}><path d="M14 1l7 6v12H5z" fill="#f0f0f0" stroke="#aaa" /><path d="M1 14 12 5l6 4-9 9H4z" fill="#c8c8d8" stroke="#99a" /></I>
                </Tool>
                <Tool $w={32} $pl={5}>
                  <I w={22}><path d="M0 10h5M6 2v16M6 2l10 8-10 8M16 10a2 2 0 1 0 4 0 2 2 0 1 0-4 0" fill="none" stroke="#333" /></I>
                </Tool>
                <Tool $w={32} $pl={8}>
                  <I w={14} h={14}><rect x=".5" y=".5" width="13" height="13" fill="#fafafa" stroke="#555" /><path d="M3 7h8M7 3v8" stroke="#222" /></I>
                </Tool>
                <Tool $w={32} $pl={6}>
                  <I><Folder c="#e8c84a" /><ellipse cx="9" cy="12" rx="4.500" ry="2.500" fill="#c22" stroke="#511" /></I>
                </Tool>
                <Tool $w={32} $pl={5}>
                  <I w={16} h={22}><text x="0" y="9" fontSize="10" fontWeight="700" fill="#2a50b8" fontFamily="Liberation Sans, sans-serif">A</text><text x="0" y="20" fontSize="10" fontWeight="700" fill="#c22" fontFamily="Liberation Sans, sans-serif">Z</text><path d="M12 0v18" stroke="#111" strokeWidth="1.600" /><path d="M9 15h6l-3 5z" fill="#111" /></I>
                </Tool>
              </OutlineTools>
              <Tree>
                {treeItems.map((t) => (
                  <TreeRow key={t.label} $depth={t.depth}>
                    {t.conn && <Connector mode={t.conn} last={t.last} stub={t.conn !== "line"} />}
                    <TreeIcon kind={t.icon} check={t.check} />
                    <TreeLabel $bold={t.bold} $sel={t.sel}>{t.label}</TreeLabel>
                  </TreeRow>
                ))}
              </Tree>
            </OutlineBody>
          </LeftPanel>

          <ViewColumn>
            <Frame>
              <Legend>
                <LegendLine $bold>A: Cap Fillets</LegendLine>
                {legendInfo.map((l) => (
                  <LegendLine key={l}>{l}</LegendLine>
                ))}
                <Scale>
                  <ScaleBars>
                    {scaleColors.map((c) => (
                      <ScaleBand key={c} $c={c} />
                    ))}
                  </ScaleBars>
                  <div>
                    {scaleValues.map((v) => (
                      <ScaleValue key={v}>{v}</ScaleValue>
                    ))}
                  </div>
                </Scale>
              </Legend>
              <StressModel />
            </Frame>
            <TabStrip>
              <span>\</span>
              <TabName $on>Geometry</TabName>
              <span>/\</span>
              <TabName>Print Preview</TabName>
              <span>/\</span>
              <TabName>Report Preview</TabName>
              <span>/</span>
            </TabStrip>
          </ViewColumn>
        </Workspace>

        <HeaderRow>
          <PaneHeader $w={373}>
            <span>Details of "Equivalent Stress"</span>
            <Pin />
          </PaneHeader>
          <PaneHeader $w={879}>
            <span>Graph</span>
            <Pin />
          </PaneHeader>
          <PaneHeader>
            <span>Tabular Data</span>
            <Pin />
          </PaneHeader>
        </HeaderRow>

        <StatusBar>
          <StatusCell $w={507} />
          <StatusCell $w={240} />
          <StatusCell $w={204}>
            <I w={22} h={24}>
              <path d="M1 6h16v12H8l-3 5v-5H1z" fill="#f4d860" stroke="#b89a30" />
              <circle cx="12" cy="7" r="6.500" fill="#2030b8" />
              <path d="M12 3v1M12 6v5" stroke="#fff" strokeWidth="2" />
            </I>
            <UnitText $ml={5}>1 Message</UnitText>
          </StatusCell>
          <StatusCell $w={449}>No Selection</StatusCell>
          <StatusCell $w={429}>
            <span>Metric (mm, kg, N, s, mV, mA)</span>
            <UnitText $ml={18}>Degrees</UnitText>
            <UnitText $ml={18}>rad/s</UnitText>
            <UnitText $ml={18}>Celsius</UnitText>
          </StatusCell>
        </StatusBar>
        <BottomLine />
      </Main>
    </Page>
  );
}
